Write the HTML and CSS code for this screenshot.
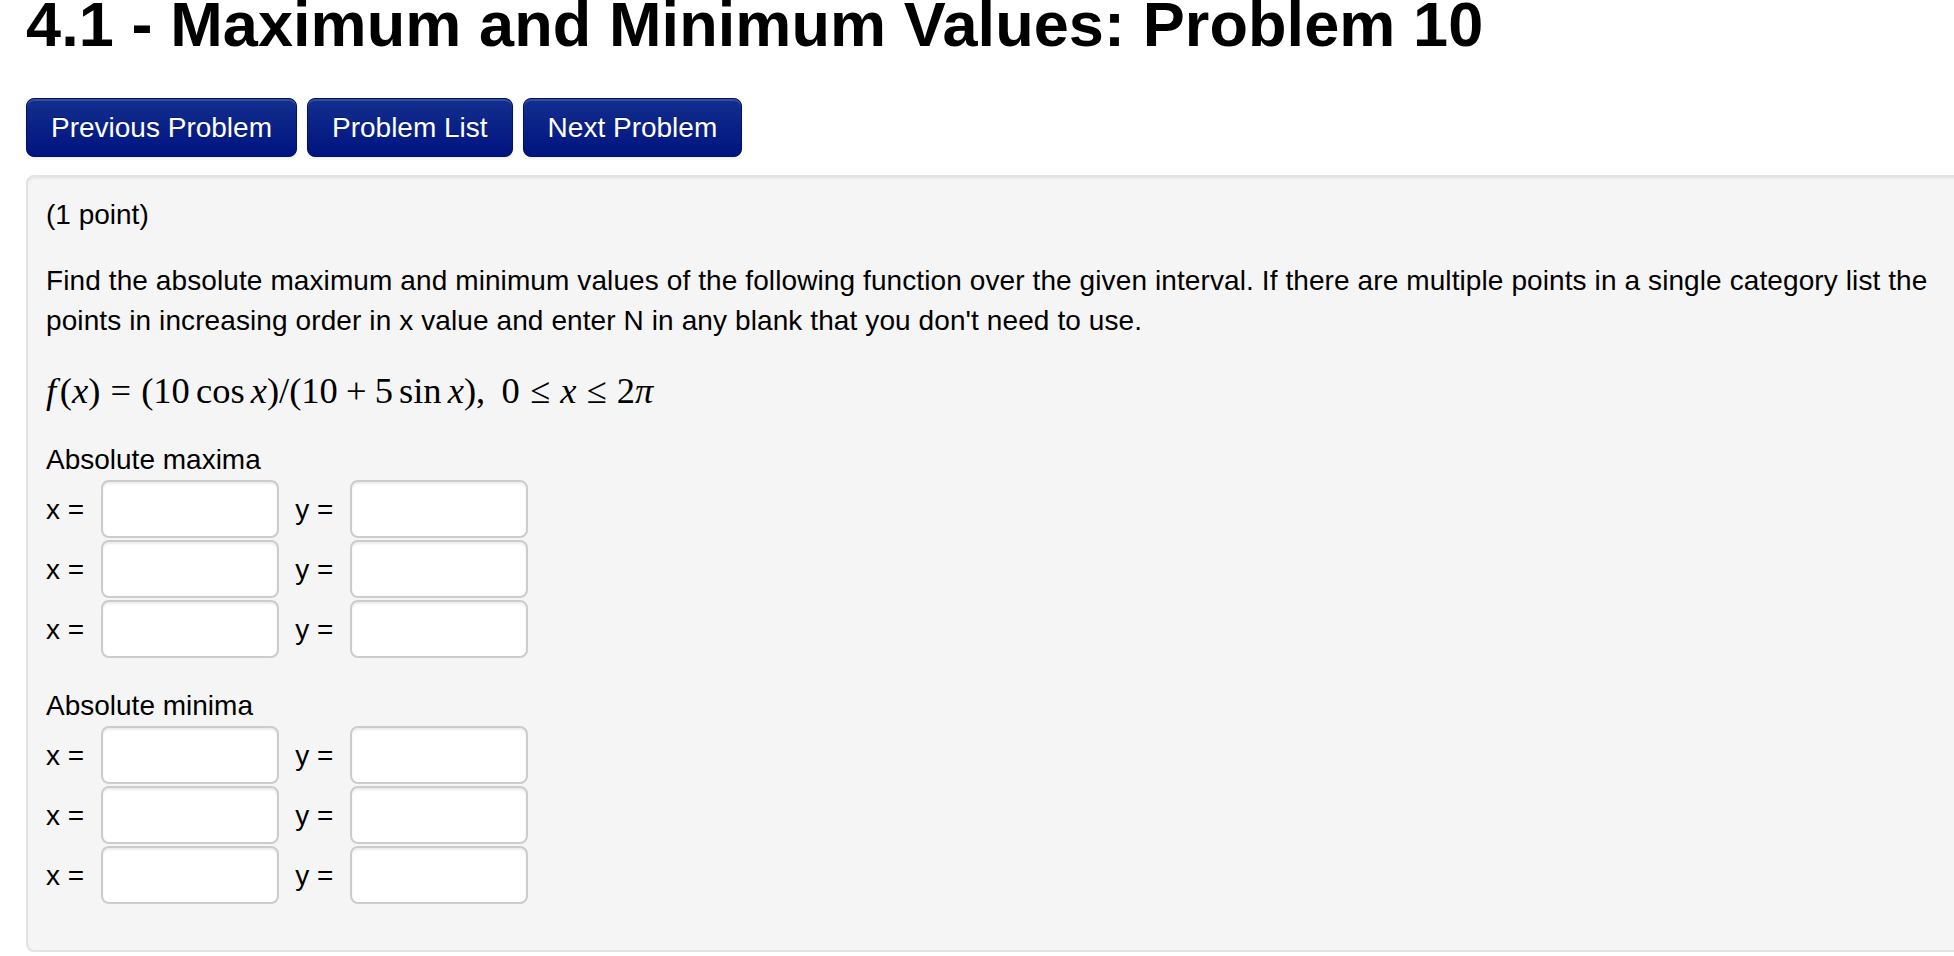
FILE: index.html
```html
<!DOCTYPE html>
<html lang="en">
<head>
<meta charset="UTF-8">
<meta name="viewport" content="width=device-width, initial-scale=1.0">
<title>4.1 - Maximum and Minimum Values: Problem 10</title>
<link rel="stylesheet" href="styles.css">
</head>
<body>
<div id="page">
    <h1>4.1 - Maximum and Minimum Values: Problem 10</h1>

    <div id="nav-buttons">
        <a class="nav-btn" href="#">Previous Problem</a>
        <a class="nav-btn" href="#">Problem List</a>
        <a class="nav-btn" href="#">Next Problem</a>
    </div>

    <div id="problem">
        <div class="points">(1 point)</div>

        <p class="statement">Find the absolute maximum and minimum values of the following function over the given interval. If there are multiple points in a single category list the points in increasing order in x value and enter N in any blank that you don't need to use.</p>

        <div class="formula">
            <i class="f">f</i>(<i>x</i>)<span class="thick"></span>=<span class="thick"></span>(10<span class="thin"></span>cos<span class="thin"></span><i>x</i>)/(10<span class="med"></span>+<span class="med"></span>5<span class="thin"></span>sin<span class="thin"></span><i>x</i>),<span class="wide"></span>0<span class="thick"></span>≤<span class="thick"></span><i>x</i><span class="thick"></span>≤<span class="thick"></span>2<i>π</i>
        </div>

        <div class="answers">
            <div class="group-title">Absolute maxima</div>
            <div class="answer-row">
                <span class="label">x =</span><input type="text" class="answer">
                <span class="label">y =</span><input type="text" class="answer">
            </div>
            <div class="answer-row">
                <span class="label">x =</span><input type="text" class="answer">
                <span class="label">y =</span><input type="text" class="answer">
            </div>
            <div class="answer-row">
                <span class="label">x =</span><input type="text" class="answer">
                <span class="label">y =</span><input type="text" class="answer">
            </div>
        </div>

        <div class="answers">
            <div class="group-title">Absolute minima</div>
            <div class="answer-row">
                <span class="label">x =</span><input type="text" class="answer">
                <span class="label">y =</span><input type="text" class="answer">
            </div>
            <div class="answer-row">
                <span class="label">x =</span><input type="text" class="answer">
                <span class="label">y =</span><input type="text" class="answer">
            </div>
            <div class="answer-row">
                <span class="label">x =</span><input type="text" class="answer">
                <span class="label">y =</span><input type="text" class="answer">
            </div>
        </div>
    </div>
</div>
</body>
</html>
```

FILE: styles.css
```css
html, body {
    overflow: hidden;
}

body {
    font-family: "Liberation Sans", Arial, Helvetica, sans-serif;
    font-size: 28px;
    line-height: 40px;
    color: #000;
    background: #fff;
    margin: 0;
    padding: 0;
}

#page {
    padding-left: 26px;
}

h1 {
    font-size: 63px;
    line-height: 49px;
    font-weight: bold;
    letter-spacing: 0.1px;
    margin: 0 0 49px 0;
}

#nav-buttons {
    display: flex;
    gap: 10px;
    margin-bottom: 18px;
}

.nav-btn {
    display: block;
    padding: 9px 24px 8px 24px;
    font-size: 28px;
    line-height: 40px;
    color: #fff;
    text-decoration: none;
    text-shadow: 0 -1px 0 rgba(0, 0, 0, 0.25);
    background-color: #021a80;
    background-image: linear-gradient(to bottom, #132f8e, #001380);
    border: 1px solid #03115e;
    border-radius: 8px;
    box-shadow: inset 0 2px 0 rgba(255, 255, 255, 0.15), 0 2px 3px rgba(0, 0, 0, 0.08);
}

#problem {
    width: 1966px;
    box-sizing: border-box;
    padding: 18px;
    background: #f5f5f5;
    border: 2px solid #e3e3e3;
    border-radius: 8px;
    box-shadow: inset 0 2px 2px rgba(0, 0, 0, 0.05);
}

.points {
    margin: 0;
}

.statement {
    margin: 26px 0 0 0;
    letter-spacing: 0.1px;
}

.formula {
    margin-top: 30px;
    font-family: "Liberation Serif", "Times New Roman", serif;
    font-size: 36.5px;
    line-height: 40px;
}

.formula i {
    font-style: italic;
}

.formula .f {
    margin-right: 0.1em;
}

.thin {
    display: inline-block;
    width: 0.167em;
}

.med {
    display: inline-block;
    width: 0.222em;
}

.thick {
    display: inline-block;
    width: 0.278em;
}

.wide {
    display: inline-block;
    width: 0.45em;
}

.answers {
    margin-top: 29px;
}

.answers + .answers {
    margin-top: 26px;
}

.answers:last-child {
    padding-bottom: 26px;
}

.answer-row {
    display: flex;
    align-items: center;
    height: 60px;
}

.label {
    display: inline-block;
    margin-right: 17px;
}

.answer {
    width: 178px;
    height: 58px;
    box-sizing: border-box;
    margin: 0 16px 2px 0;
    padding: 8px 12px;
    font-family: inherit;
    font-size: 28px;
    background: #fff;
    border: 2px solid #cccccc;
    border-radius: 8px;
    box-shadow: inset 0 2px 2px rgba(0, 0, 0, 0.075);
}
```
